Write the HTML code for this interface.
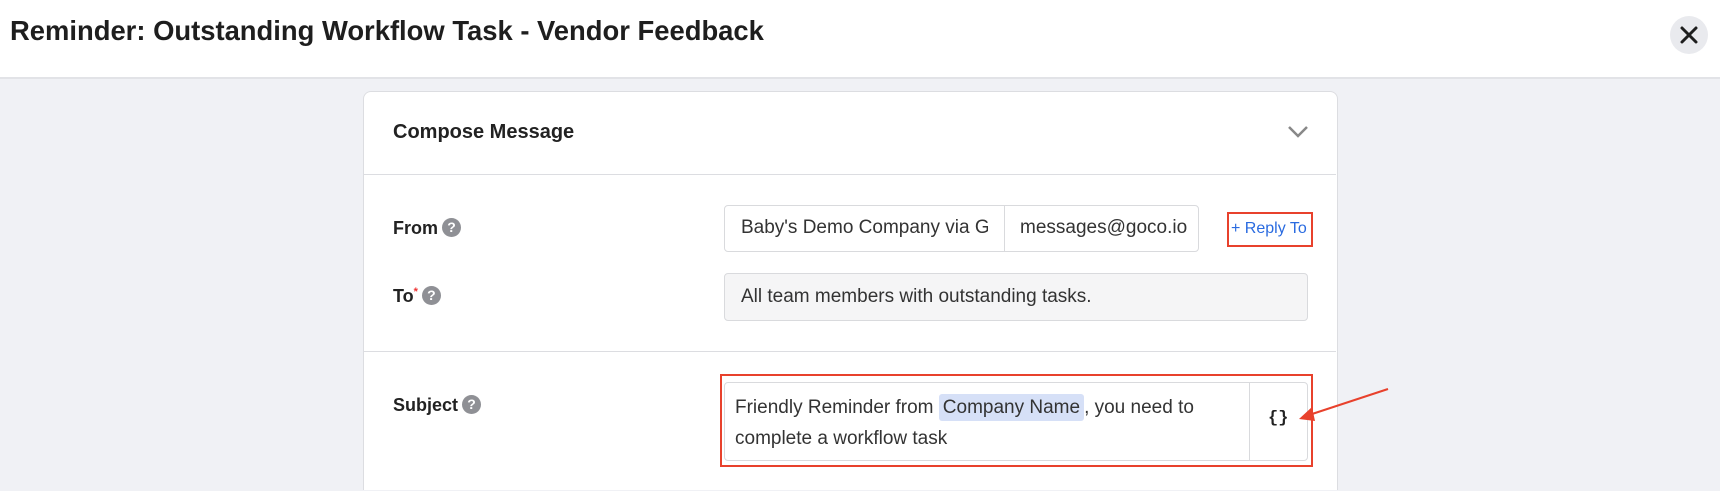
<!DOCTYPE html><html><head><style>
html,body{margin:0;height:491px;overflow:hidden}
body{width:1720px;background:#f0f1f5;font-family:"Liberation Sans",sans-serif;color:#222}
#w{position:relative;width:1720px;height:491px;overflow:hidden}
.a{position:absolute}
.hdr{left:0;top:0;width:1720px;height:77px;background:#fff;border-bottom:2px solid #e2e3e7}
.card{left:363px;top:91px;width:973px;height:398px;background:#fff;border:1px solid #dcdde1;border-bottom:none;border-radius:8px 8px 0 0}
.q{display:inline-block;width:19px;height:19px;border-radius:50%;background:#8f9095;color:#fff;font-size:14px;font-weight:bold;text-align:center;line-height:19px;vertical-align:2px;margin-left:4px}
.lbl{font-size:18px;font-weight:bold;color:#222}
.inp{border:1px solid #d9dadd;border-radius:4px;box-sizing:border-box;font-size:18px;color:#333}
</style></head><body><div id="w">
<div class="a hdr"></div>
<div class="a" style="left:10px;top:15px;font-size:27.4px;font-weight:bold;color:#1e1e1e">Reminder: Outstanding Workflow Task - Vendor Feedback</div>
<div class="a" style="left:1670px;top:16px;width:38px;height:38px;border-radius:50%;background:#e9eaee"></div>
<svg class="a" style="left:1678px;top:24px" width="22" height="22"><path d="M4 4L18 18M18 4L4 18" stroke="#1e1e1e" stroke-width="3" stroke-linecap="round"/></svg>
<div class="a card"></div>
<div class="a" style="left:393px;top:121px;font-size:20px;font-weight:bold">Compose Message</div>
<svg class="a" style="left:1287px;top:125px" width="22" height="14"><path d="M2 2L11 11L20 2" stroke="#888" stroke-width="2.5" fill="none"/></svg>
<div class="a" style="left:364px;top:174px;width:972px;height:1px;background:#dcdde1"></div>
<div class="a lbl" style="left:393px;top:218px">From<span class="q">?</span></div>
<div class="a lbl" style="left:393px;top:286px">To<sup style="color:#e33;font-size:11px">*</sup><span class="q">?</span></div>
<div class="a inp" style="left:724px;top:205px;width:475px;height:47px"></div>
<div class="a" style="left:1004px;top:206px;width:1px;height:45px;background:#d9dadd"></div>
<div class="a" style="left:741px;top:217px;font-size:19px;width:247px;overflow:hidden;white-space:nowrap;color:#333">Baby's Demo Company via GoCo</div>
<div class="a" style="left:1020px;top:217px;font-size:19px;color:#333">messages@goco.io</div>
<div class="a" style="left:1227px;top:212px;width:82px;height:31px;border:2px solid #e8412c"></div>
<div class="a" style="left:1231px;top:220px;font-size:16px;color:#2a6be0">+ Reply To</div>
<div class="a inp" style="left:724px;top:273px;width:584px;height:48px;background:#f5f5f6"></div>
<div class="a" style="left:741px;top:286px;font-size:19px;color:#333">All team members with outstanding tasks.</div>
<div class="a" style="left:364px;top:351px;width:972px;height:1px;background:#dcdde1"></div>
<div class="a lbl" style="left:393px;top:395px">Subject<span class="q">?</span></div>
<div class="a" style="left:720px;top:374px;width:589px;height:89px;border:2px solid #e8412c"></div>
<div class="a inp" style="left:724px;top:382px;width:584px;height:79px"></div>
<div class="a" style="left:1249px;top:383px;width:1px;height:77px;background:#d9dadd"></div>
<div class="a" style="left:1268px;top:409px;font-size:17px;font-weight:bold;font-family:'Liberation Mono',monospace">{}</div>
<div class="a" style="left:735px;top:392px;font-size:19px;color:#333;line-height:31px;width:500px">Friendly Reminder from <span style="background:#d6e0f7;border-radius:3px;padding:3px 4px">Company Name</span>, you need to<br>complete a workflow task</div>
<svg class="a" style="left:1290px;top:380px" width="110" height="50"><path d="M98 9L16 36" stroke="#e8412c" stroke-width="2"/><path d="M9 39L22 27L25 41Z" fill="#e8412c"/></svg>
</div></body></html>
